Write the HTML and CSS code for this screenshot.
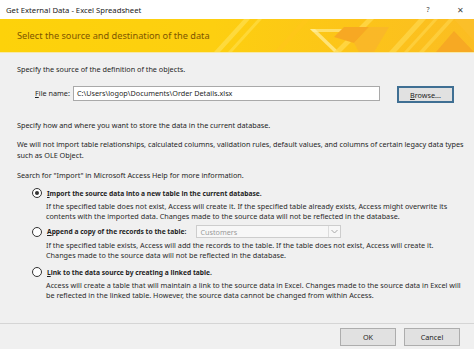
FILE: index.html
```html
<!DOCTYPE html>
<html lang="en">
<head>
    <meta charset="UTF-8">
    <title>Get External Data - Excel Spreadsheet</title>
    <link rel="stylesheet" href="styles.css">
</head>
<body>
    <div class="dialog">
        <!-- Window title bar -->
        <div class="titlebar">
            <span class="title">Get External Data - Excel Spreadsheet</span>
            <span class="title-btn help">?</span>
            <span class="title-btn close">&#x2715;</span>
        </div>

        <!-- Yellow banner -->
        <div class="banner">
            <span class="banner-text">Select the source and destination of the data</span>
            <svg class="banner-art" width="260" height="33" viewBox="0 0 260 33">
                <polygon points="0,33 30,0 36,0 6,33" fill="#ffe35a" opacity="0.6"/>
                <polygon points="14,33 44,0 48,0 18,33" fill="#ffe35a" opacity="0.5"/>
                <polygon points="60,33 90,0 96,0 66,33" fill="#ffc61a" opacity="0.7"/>
                <polygon points="96,10 120,33 125,33 101,10" fill="#fff0a0" opacity="0.7"/>
                <polygon points="96,10 150,10 150,13 99,13" fill="#fff0a0" opacity="0.6"/>
                <polygon points="120,33 153,0 160,0 127,33" fill="#ffd84a" opacity="0.8"/>
                <polygon points="130,8 155,8 140,24 120,18" fill="#f7a823"/>
                <polygon points="140,24 155,8 175,8 160,33 145,33" fill="#f9b52b" opacity="0.8"/>
                <polygon points="175,33 205,0 212,0 182,33" fill="#ffdc55" opacity="0.6"/>
                <polygon points="190,33 220,0 224,0 194,33" fill="#ffdc55" opacity="0.5"/>
                <polygon points="205,33 235,0 240,0 210,33" fill="#ffdc55" opacity="0.5"/>
                <polygon points="222,33 240,12 260,33" fill="#f6a623" opacity="0.9"/>
                <polygon points="240,0 260,0 260,22" fill="#fbbf2c" opacity="0.8"/>
            </svg>
        </div>

        <div class="content">
            <p class="line first">Specify the source of the definition of the objects.</p>

            <div class="file-row">
                <label class="file-label"><u>F</u>ile name:</label>
                <div class="file-input">C:\Users\logop\Documents\Order Details.xlsx</div>
                <button class="btn browse"><u>B</u>rowse...</button>
            </div>

            <p class="line how">Specify how and where you want to store the data in the current database.</p>
            <p class="para warn">We will not import table relationships, calculated columns, validation rules, default values, and columns of certain legacy data types such as OLE Object.</p>
            <p class="para search">Search for "Import" in Microsoft Access Help for more information.</p>

            <div class="option opt-import">
                <div class="radio-row">
                    <span class="radio checked"></span>
                    <span class="radio-label"><u>I</u>mport the source data into a new table in the current database.</span>
                </div>
                <p class="desc">If the specified table does not exist, Access will create it. If the specified table already exists, Access might overwrite its contents with the imported data. Changes made to the source data will not be reflected in the database.</p>
            </div>

            <div class="option opt-append">
                <div class="radio-row tall">
                    <span class="radio"></span>
                    <span class="radio-label"><u>A</u>ppend a copy of the records to the table:</span>
                    <div class="dropdown">
                        <span>Customers</span>
                        <span class="arrow">
                            <svg width="7" height="5" viewBox="0 0 7 5"><polyline points="0.5,1 3.5,4 6.5,1" fill="none" stroke="#a8a8a8" stroke-width="1"/></svg>
                        </span>
                    </div>
                </div>
                <p class="desc">If the specified table exists, Access will add the records to the table. If the table does not exist, Access will create it. Changes made to the source data will not be reflected in the database.</p>
            </div>

            <div class="option opt-link">
                <div class="radio-row">
                    <span class="radio"></span>
                    <span class="radio-label"><u>L</u>ink to the data source by creating a linked table.</span>
                </div>
                <p class="desc">Access will create a table that will maintain a link to the source data in Excel. Changes made to the source data in Excel will be reflected in the linked table. However, the source data cannot be changed from within Access.</p>
            </div>
        </div>

        <div class="footer">
            <button class="btn ok">OK</button>
            <button class="btn cancel">Cancel</button>
        </div>
    </div>
</body>
</html>
```

FILE: styles.css
```css
/* Global */
body {
    margin: 0;
    font-family: 'Noto Sans', 'Open Sans', sans-serif;
    color: #1f1f1f;
    background: #ffffff;
}

.dialog {
    width: 474px;
    height: 349px;
    display: flex;
    flex-direction: column;
    background: #f0f0f0;
    overflow: hidden;
}

/* Title bar */
.titlebar {
    height: 19px;
    background: #ffffff;
    display: flex;
    align-items: center;
    padding-left: 6px;
    font-size: 7.7px;
    color: #222;
}

.title {
    flex: 1;
}

.title-btn {
    font-size: 8px;
    color: #444;
    text-align: center;
}

.help {
    width: 12px;
    margin-right: 20px;
    font-size: 7px;
}

.close {
    width: 12px;
    margin-right: 8px;
}

/* Banner */
.banner {
    height: 33px;
    position: relative;
    display: flex;
    align-items: center;
    padding-left: 17px;
    background: linear-gradient(90deg, #fdd20a 0%, #fdcf10 45%, #fcc419 75%, #fbbd22 100%);
    border-bottom: 1px solid #f7e9a8;
}

.banner-text {
    font-size: 9.2px;
    color: #7e5600;
    position: relative;
    z-index: 1;
    margin-top: -1px;
}

.banner-art {
    position: absolute;
    right: 0;
    top: 0;
}

/* Main content */
.content {
    flex: 1;
    padding: 0 10px 0 17px;
    font-size: 7.25px;
}

p {
    margin: 0;
}

.line {
    line-height: 10px;
}

.first {
    margin-top: 11px;
}

.file-row {
    margin-top: 12px;
    height: 17px;
    display: flex;
    align-items: flex-start;
}

.file-label {
    width: 38px;
    margin-left: 18px;
    line-height: 15px;
}

.file-input {
    width: 302px;
    height: 13px;
    border: 1px solid #a9a9a9;
    background: #ffffff;
    line-height: 13px;
    padding-left: 3px;
    margin-right: 17px;
}

.btn {
    font-family: inherit;
    font-size: 7.25px;
    color: #1f1f1f;
    background: #e1e1e1;
    border: 1px solid #adadad;
    padding: 0;
}

.browse {
    width: 57px;
    height: 17px;
    border: 2px solid #3f6f93;
}

.how {
    margin-top: 17px;
}

.para {
    line-height: 11px;
}

.warn {
    margin-top: 9px;
    margin-right: -8px;
}

.search {
    margin-top: 9px;
}

/* Radio options */
.option {
    padding-left: 15px;
}

.opt-import {
    margin-top: 7px;
}

.opt-append {
    margin-top: 4px;
}

.opt-link {
    margin-top: 7px;
}

.radio-row {
    height: 10px;
    display: flex;
    align-items: center;
}

.radio-row.tall {
    height: 13px;
}

.radio {
    width: 8px;
    height: 8px;
    border: 1px solid #333;
    border-radius: 50%;
    background: #ffffff;
    margin-right: 5px;
    display: flex;
    justify-content: center;
    align-items: center;
}

.radio.checked::after {
    content: '';
    width: 4px;
    height: 4px;
    border-radius: 50%;
    background: #333;
}

.radio-label {
    font-weight: bold;
    font-size: 6.7px;
}

.desc {
    margin-top: 3px;
    padding-left: 14px;
    line-height: 10px;
    color: #2a2a2a;
}

.opt-append .desc {
    margin-top: 2px;
}

.dropdown {
    margin-left: 10px;
    width: 140px;
    height: 11px;
    border: 1px solid #cdcdcd;
    background: #f7f7f7;
    color: #9a9a9a;
    display: flex;
    align-items: center;
    padding-left: 3px;
}

.dropdown span:first-child {
    flex: 1;
}

.arrow {
    width: 11px;
    height: 11px;
    border-left: 1px solid #dcdcdc;
    display: flex;
    justify-content: center;
    align-items: center;
}

/* Footer */
.footer {
    height: 26px;
    border-top: 1px solid #d5d5d5;
    display: flex;
    justify-content: flex-end;
    align-items: flex-start;
    padding-top: 4px;
    padding-right: 14px;
    box-sizing: border-box;
}

.ok,
.cancel {
    width: 56px;
    height: 18px;
}

.ok {
    margin-right: 8px;
}
```
